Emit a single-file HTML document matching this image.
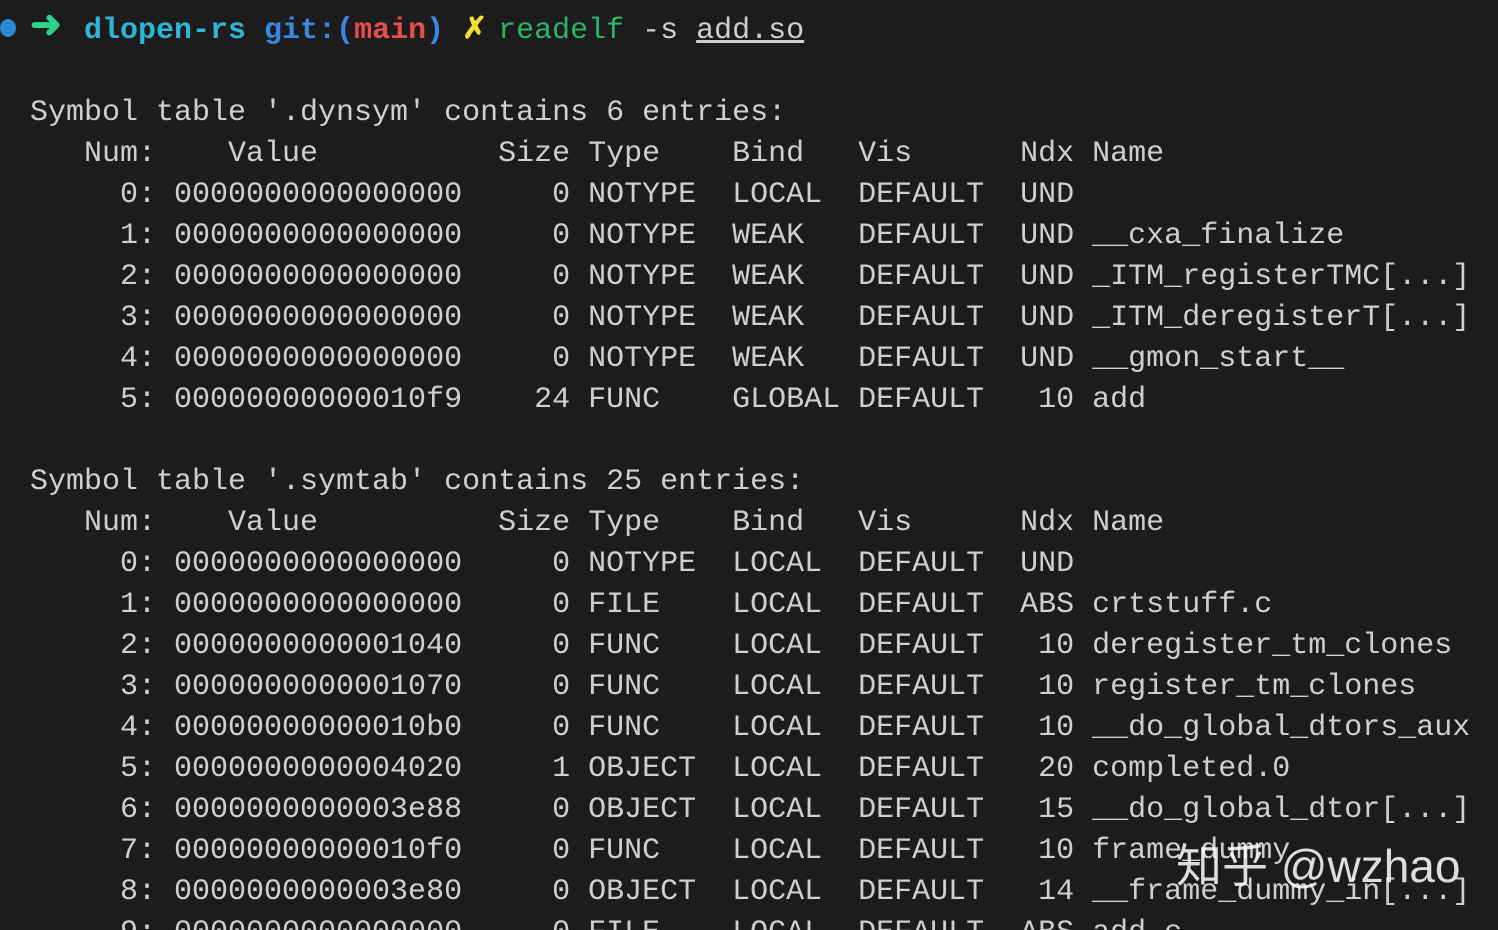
<html><head><style>
html,body{margin:0;height:930px;overflow:hidden}
body{background:#1c1c1c;width:1498px;position:relative}
pre{position:absolute;left:30px;top:11px;margin:0;font:30px/41px "Liberation Mono",monospace;color:#cfcfcf;white-space:pre}
.p{position:absolute;top:11px;left:84px;font:bold 30px/41px "Liberation Mono",monospace;white-space:pre}
.wm{position:absolute;left:1176px;top:836px;font:46px/60px "Liberation Sans","Noto Sans CJK SC",sans-serif;color:rgba(255,255,255,.85)}
</style></head><body>
<div style="position:absolute;left:0;top:19px;width:16px;height:18px;border-radius:50%;background:#2a8bd0"></div>
<div class="p" style="left:30px;top:7px;font-size:38px;color:#2fd28a">➜</div>
<div class="p"><span style="color:#2fb6d6">dlopen-rs</span> <span style="color:#3a86e0">git:(</span><span style="color:#e84d4d">main</span><span style="color:#3a86e0">)</span> <span style="display:inline-block;width:36px;color:#f0e030">✗</span><span style="font-weight:normal;color:#2db36a">readelf</span><span style="font-weight:normal;color:#cfcfcf"> -s <u>add.so</u></span></div>
<pre>


Symbol table '.dynsym' contains 6 entries:
   Num:    Value          Size Type    Bind   Vis      Ndx Name
     0: 0000000000000000     0 NOTYPE  LOCAL  DEFAULT  UND 
     1: 0000000000000000     0 NOTYPE  WEAK   DEFAULT  UND __cxa_finalize
     2: 0000000000000000     0 NOTYPE  WEAK   DEFAULT  UND _ITM_registerTMC[...]
     3: 0000000000000000     0 NOTYPE  WEAK   DEFAULT  UND _ITM_deregisterT[...]
     4: 0000000000000000     0 NOTYPE  WEAK   DEFAULT  UND __gmon_start__
     5: 00000000000010f9    24 FUNC    GLOBAL DEFAULT   10 add

Symbol table '.symtab' contains 25 entries:
   Num:    Value          Size Type    Bind   Vis      Ndx Name
     0: 0000000000000000     0 NOTYPE  LOCAL  DEFAULT  UND 
     1: 0000000000000000     0 FILE    LOCAL  DEFAULT  ABS crtstuff.c
     2: 0000000000001040     0 FUNC    LOCAL  DEFAULT   10 deregister_tm_clones
     3: 0000000000001070     0 FUNC    LOCAL  DEFAULT   10 register_tm_clones
     4: 00000000000010b0     0 FUNC    LOCAL  DEFAULT   10 __do_global_dtors_aux
     5: 0000000000004020     1 OBJECT  LOCAL  DEFAULT   20 completed.0
     6: 0000000000003e88     0 OBJECT  LOCAL  DEFAULT   15 __do_global_dtor[...]
     7: 00000000000010f0     0 FUNC    LOCAL  DEFAULT   10 frame_dummy
     8: 0000000000003e80     0 OBJECT  LOCAL  DEFAULT   14 __frame_dummy_in[...]
     9: 0000000000000000     0 FILE    LOCAL  DEFAULT  ABS add.c
</pre>
<div class="wm">知乎 @wzhao</div>
</body></html>
